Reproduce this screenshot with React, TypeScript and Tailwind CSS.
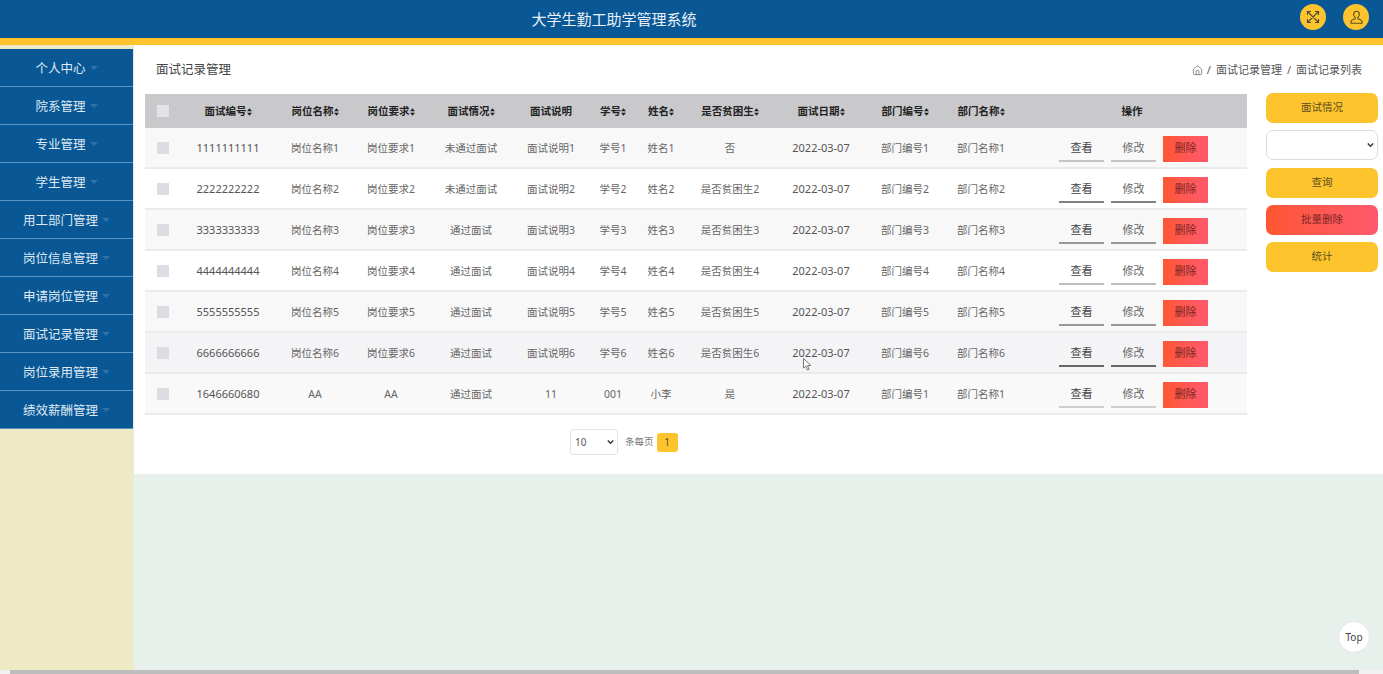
import React from "react";
import { House } from "lucide-react";

const font = "font-['Noto_Sans','Noto_Sans_CJK_SC',sans-serif]";

const menus = [
  "个人中心",
  "院系管理",
  "专业管理",
  "学生管理",
  "用工部门管理",
  "岗位信息管理",
  "申请岗位管理",
  "面试记录管理",
  "岗位录用管理",
  "绩效薪酬管理",
];

const rows = [
  { id: "1111111111", n: "1", status: "未通过面试", poor: "否", bg: "bg-[#f8f8f9]", line: "border-[#c4c4c4]" },
  { id: "2222222222", n: "2", status: "未通过面试", poor: "是否贫困生2", bg: "bg-white", line: "border-[#808080]" },
  { id: "3333333333", n: "3", status: "通过面试", poor: "是否贫困生3", bg: "bg-[#f8f8f9]", line: "border-[#999999]" },
  { id: "4444444444", n: "4", status: "通过面试", poor: "是否贫困生4", bg: "bg-white", line: "border-[#bdbdbd]" },
  { id: "5555555555", n: "5", status: "通过面试", poor: "是否贫困生5", bg: "bg-[#f8f8f9]", line: "border-[#999999]" },
  { id: "6666666666", n: "6", status: "通过面试", poor: "是否贫困生6", bg: "bg-[#f4f4f7]", line: "border-[#666666]" },
];

function SortIcon() {
  return (
    <svg width="5" height="8" viewBox="0 0 6 9" className="inline-block align-[-1px]">
      <path d="M3 0 L6 3.6 L0 3.6 Z M3 9 L0 5.4 L6 5.4 Z" fill="#222" />
    </svg>
  );
}

function Chevron() {
  return (
    <svg width="7" height="5" viewBox="0 0 7 5" fill="none" stroke="#333" strokeWidth="1.4" className="absolute right-[4px] top-1/2 -translate-y-1/2 pointer-events-none">
      <path d="M0.8 1 L3.5 3.7 L6.2 1" />
    </svg>
  );
}

function Th(props: { label: string; sort?: boolean }) {
  return (
    <th className="text-[10.5px] font-bold text-[#222] text-center p-0 pt-[2px]">
      {props.label}
      {props.sort && <SortIcon />}
    </th>
  );
}

function Actions(props: { line: string }) {
  return (
    <td className="p-0">
      <div className="flex items-center gap-[7px] pl-[42px]">
        <button className={`w-[45px] h-[26px] pt-[2px] border-b-2 ${props.line} text-[11px] text-[#444]`}>查看</button>
        <button className={`w-[45px] h-[26px] pt-[2px] border-b-2 ${props.line} text-[11px] text-[#666]`}>修改</button>
        <button className="w-[45px] h-[26px] bg-gradient-to-r from-[#ff5630] to-[#ff5a6c] text-[11px] text-[#7a2626]">
          删除
        </button>
      </div>
    </td>
  );
}

function Row(props: {
  id: string;
  name: string;
  req: string;
  status: string;
  desc: string;
  no: string;
  stu: string;
  poor: string;
  dept: string;
  deptName: string;
  bg: string;
  line: string;
}) {
  return (
    <tr className={`h-[41px] text-center text-[10.5px] text-[#666] [&>td]:pt-[2px] [&>td]:border-b-2 [&>td]:border-[#ebebeb] ${props.bg}`}>
      <td className="p-0">
        <div className="w-[12px] h-[12px] ml-[12px] -mt-[2px] bg-[#dcdde2]" />
      </td>
      <td className="p-0 text-[11px] text-[#555]">{props.id}</td>
      <td className="p-0">{props.name}</td>
      <td className="p-0">{props.req}</td>
      <td className="p-0">{props.status}</td>
      <td className="p-0">{props.desc}</td>
      <td className="p-0">{props.no}</td>
      <td className="p-0">{props.stu}</td>
      <td className="p-0">{props.poor}</td>
      <td className="p-0 text-[11px] text-[#555]">2022-03-07</td>
      <td className="p-0">{props.dept}</td>
      <td className="p-0">{props.deptName}</td>
      <Actions line={props.line} />
    </tr>
  );
}

function YellowButton(props: { label: string }) {
  return (
    <button className="w-[112px] h-[30px] rounded-[7px] bg-[#fec42d] text-[10.5px] text-[#5a4d20]">{props.label}</button>
  );
}

export default function App() {
  return (
    <div className={`relative h-[674px] w-full overflow-hidden flex flex-col bg-[#e8f0ec] ${font}`}>
      {/* Header */}
      <header className="h-[45px] shrink-0 bg-[#0a5796] border-b-[7px] border-[#fec42d] flex items-center justify-center pr-[155px] relative">
        <h1 className="text-[15px] font-normal text-[#e9f1f7]">大学生勤工助学管理系统</h1>
        <div className="absolute right-[14px] top-[4px] flex gap-[17px]">
          <div className="w-[26px] h-[26px] rounded-full bg-[#fec42d] flex items-center justify-center">
            <svg width="14" height="14" viewBox="0 0 14 14" fill="none" stroke="#4b4a3a" strokeWidth="1.1">
              <path d="M2 2 L12 12 M12 2 L2 12 M1.5 5 L1.5 1.5 L5 1.5 M9 1.5 L12.5 1.5 L12.5 5 M1.5 9 L1.5 12.5 L5 12.5 M12.5 9 L12.5 12.5 L9 12.5" />
            </svg>
          </div>
          <div className="w-[26px] h-[26px] rounded-full bg-[#fec42d] flex items-center justify-center">
            <svg width="15" height="15" viewBox="0 0 15 15" fill="none" stroke="#5a4d20" strokeWidth="1.1">
              <path d="M7.5 1.2 C5.6 1.2 4.7 2.6 4.7 4.2 C4.7 5.6 5.3 6.8 6.2 7.5 L6.2 8.8 C4.6 9.4 2 10 2 11.6 L2 13.2 L13 13.2 L13 11.6 C13 10 10.4 9.4 8.8 8.8 L8.8 7.5 C9.7 6.8 10.3 5.6 10.3 4.2 C10.3 2.6 9.4 1.2 7.5 1.2 Z" />
            </svg>
          </div>
        </div>
      </header>

      <div className="flex flex-1 min-h-0">
        {/* Sidebar */}
        <aside className="w-[134px] shrink-0 bg-[#eeeac5] pt-[4px] border-r border-[#e4ebe0]">
          {menus.map((m) => (
            <div
              key={m}
              className="h-[38px] bg-[#0a5796] border-b border-[#5d93bd] flex items-center justify-center gap-[4px] text-[12.5px] text-[#dfe9f2]"
            >
              <span className="pt-[3px]">{m}</span>
              <span className="w-0 h-0 border-x-[4px] border-x-transparent border-t-[4px] border-t-[#2f70a6]" />
            </div>
          ))}
        </aside>

        {/* Main */}
        <main className="flex-1 min-w-0">
          <div className="bg-white h-[429px] pl-[11px] pr-[5px]">
            <div className="h-[49px] flex items-center justify-between pl-[11px] pt-[2px] pr-[16px]">
              <span className="text-[12.5px] text-[#444]">面试记录管理</span>
              <span className="flex items-center text-[11px] text-[#555]">
                <House size={11} color="#555" strokeWidth={1.4} />
                <span className="ml-[4px]">/</span>
                <span className="ml-[5px]">面试记录管理</span>
                <span className="ml-[5px]">/</span>
                <span className="ml-[5px]">面试记录列表</span>
              </span>
            </div>
            <div className="flex items-start justify-between">
              <div className="w-[1102px]">
                <table className="w-[1102px] table-fixed border-separate border-spacing-0">
                  <colgroup>
                    <col className="w-[36px]" />
                    <col className="w-[94px]" />
                    <col className="w-[80px]" />
                    <col className="w-[72px]" />
                    <col className="w-[88px]" />
                    <col className="w-[72px]" />
                    <col className="w-[52px]" />
                    <col className="w-[44px]" />
                    <col className="w-[94px]" />
                    <col className="w-[88px]" />
                    <col className="w-[80px]" />
                    <col className="w-[72px]" />
                    <col className="w-[230px]" />
                  </colgroup>
                  <thead>
                    <tr className="h-[34px] bg-[#c9c9cb]">
                      <th className="p-0">
                        <div className="w-[12px] h-[12px] ml-[12px] bg-[#e3e4e8]" />
                      </th>
                      <Th label="面试编号" sort />
                      <Th label="岗位名称" sort />
                      <Th label="岗位要求" sort />
                      <Th label="面试情况" sort />
                      <Th label="面试说明" />
                      <Th label="学号" sort />
                      <Th label="姓名" sort />
                      <Th label="是否贫困生" sort />
                      <Th label="面试日期" sort />
                      <Th label="部门编号" sort />
                      <Th label="部门名称" sort />
                      <Th label="操作" />
                    </tr>
                  </thead>
                  <tbody>
                    {rows.map((r) => (
                      <Row
                        key={r.id}
                        id={r.id}
                        name={"岗位名称" + r.n}
                        req={"岗位要求" + r.n}
                        status={r.status}
                        desc={"面试说明" + r.n}
                        no={"学号" + r.n}
                        stu={"姓名" + r.n}
                        poor={r.poor}
                        dept={"部门编号" + r.n}
                        deptName={"部门名称" + r.n}
                        bg={r.bg}
                        line={r.line}
                      />
                    ))}
                    <Row
                      id="1646660680"
                      name="AA"
                      req="AA"
                      status="通过面试"
                      desc="11"
                      no="001"
                      stu="小李"
                      poor="是"
                      dept="部门编号1"
                      deptName="部门名称1"
                      bg="bg-[#f9f9fa]"
                      line="border-[#cfcfcf]"
                    />
                  </tbody>
                </table>
                {/* Pagination */}
                <div className="flex items-center ml-[425px] mt-[14px]">
                  <div className="relative">
                    <select className="block appearance-none w-[48px] h-[26px] pl-[4px] rounded-[3px] border border-[#e4e4e4] bg-white text-[10px] text-[#555]">
                      <option>10</option>
                    </select>
                    <Chevron />
                  </div>
                  <span className="ml-[7px] text-[9.5px] text-[#777]">条每页</span>
                  <span className="ml-[3px] w-[21px] h-[19px] rounded-[3px] bg-[#fec42d] flex items-center justify-center text-[10px] text-[#5a4d20]">
                    1
                  </span>
                </div>
              </div>
              {/* Right actions */}
              <div className="w-[112px] -mt-px flex flex-col">
                <YellowButton label="面试情况" />
                <div className="relative mt-[7px]">
                  <select className="block appearance-none w-[112px] h-[30px] rounded-[7px] border border-[#dcdcdc] bg-white text-[11px]" />
                  <Chevron />
                </div>
                <div className="mt-[8px]">
                  <YellowButton label="查询" />
                </div>
                <button className="w-[112px] h-[30px] mt-[7px] rounded-[7px] bg-gradient-to-r from-[#ff5630] to-[#ff5a6c] text-[10.5px] text-[#7a2626]">
                  批量删除
                </button>
                <div className="mt-[7px]">
                  <YellowButton label="统计" />
                </div>
              </div>
            </div>
          </div>
        </main>
      </div>

      {/* Fake horizontal scrollbar */}
      <div className="h-[4px] shrink-0 bg-[#f1f1f1] pl-[10px]">
        <div className="h-full w-[1349px] bg-[#bdbdbd]" />
      </div>

      {/* Back to top */}
      <div className="absolute left-[1338px] top-[621px] w-[32px] h-[32px] rounded-full bg-white border border-[#e6e6e6] flex items-center justify-center text-[10px] text-[#444]">
        Top
      </div>

      {/* Mouse cursor */}
      <svg className="absolute left-[803px] top-[358px]" width="9" height="13" viewBox="0 0 9 13">
        <path d="M0.5 0.5 L0.5 10 L2.8 8 L4.4 12 L6 11.3 L4.5 7.6 L7.8 7.4 Z" fill="#fff" stroke="#555" strokeWidth="0.8" />
      </svg>
    </div>
  );
}
